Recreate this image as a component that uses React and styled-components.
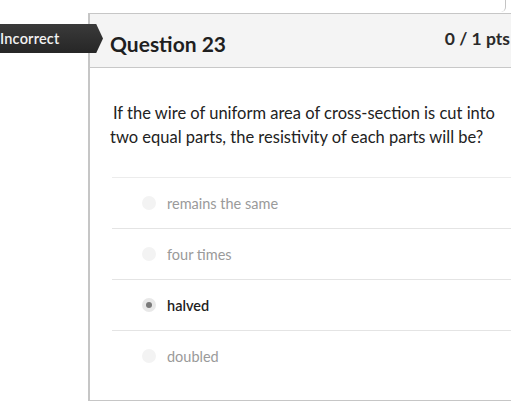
import React from "react";
import styled, { createGlobalStyle } from "styled-components";

const Global = createGlobalStyle`
  html, body { margin: 0; padding: 0; background: #fff; overflow: hidden; }
  body { font-family: Lato, "Open Sans", "Liberation Sans", sans-serif; color: #2d3b45; }
`;

const Page = styled.div`
  position: relative;
  width: 511px;
  height: 408px;
  overflow: hidden;
`;

const TopStrip = styled.div`
  height: 13px;
  display: flex;
  justify-content: flex-end;
`;

const PrevEdge = styled.div`
  width: 24px;
  height: 12px;
  margin-right: 5px;
  border-right: 1px solid #c4c4c4;
  border-bottom-right-radius: 5px;
`;

const Card = styled.div`
  margin-left: 88px;
  width: 432px;
  height: 388px;
  box-sizing: border-box;
  border: 1px solid #c6c6c6;
  border-left: 2px solid #c6c6c6;
  display: flex;
  flex-direction: column;
`;

const Header = styled.div`
  height: 54px;
  box-sizing: border-box;
  background: #f4f4f4;
  border-bottom: 1px solid #c8c8c8;
  display: flex;
  justify-content: space-between;
  padding: 0 9px 0 20px;
`;

const Title = styled.div`
  font-size: 21px;
  font-weight: 700;
  color: #1f1f1f;
  margin-top: 17px;
  line-height: 26px;
`;

const Points = styled.div`
  font-size: 17.5px;
  font-weight: 700;
  color: #2a2a2a;
  margin-top: 14px;
  line-height: 22px;
`;

const Body = styled.div`
  padding: 33px 0 0 20px;
`;

const QuestionText = styled.p`
  margin: 0 14px 0 0;
  font-size: 16.5px;
  line-height: 24px;
  color: #222;
  text-indent: 3px;
  height: 76px;
`;

const Answers = styled.div`
  margin-left: 2px;
`;

const Row = styled.div`
  height: 51px;
  box-sizing: border-box;
  border-top: ${(p) => (p.$first ? "1px solid #ececec" : "1px solid #e4e4e4")};
  display: flex;
  align-items: center;
  padding-left: 30px;
  gap: 11px;
`;

const Radio = styled.span`
  width: 14px;
  height: 14px;
  border-radius: 50%;
  background: ${(p) => (p.$checked ? "#e8e8e8" : "#f3f3f3")};
  display: flex;
  align-items: center;
  justify-content: center;
  flex: none;
  &::after {
    content: "";
    width: 6px;
    height: 6px;
    border-radius: 50%;
    background: #7a7a7a;
    display: ${(p) => (p.$checked ? "block" : "none")};
  }
`;

const AnswerText = styled.span`
  font-size: 14.5px;
  color: ${(p) => (p.$checked ? "#1e1e1e" : "#9a9a9a")};
  font-weight: ${(p) => (p.$checked ? 600 : 400)};
`;

const Badge = styled.div`
  position: absolute;
  left: -10px;
  top: 24px;
  width: 113px;
  height: 29px;
  background: linear-gradient(#3a3a3a, #262626);
  clip-path: polygon(0 0, 94% 0, 100% 50%, 94% 100%, 0 100%);
  color: #f2f2f2;
  font-size: 14.5px;
  font-weight: 600;
  letter-spacing: 0.2px;
  display: flex;
  align-items: center;
  padding-left: 10px;
  box-sizing: border-box;
`;

const answers = [
  { text: "remains the same" },
  { text: "four times" },
  { text: "halved", checked: true },
  { text: "doubled" },
];

export default function App() {
  return (
    <Page>
      <Global />
      <TopStrip>
        <PrevEdge />
      </TopStrip>
      <Card>
        <Header>
          <Title>Question 23</Title>
          <Points>0 / 1 pts</Points>
        </Header>
        <Body>
          <QuestionText>
            If the wire of uniform area of cross-section is cut into two equal parts, the resistivity of each parts will be?
          </QuestionText>
          <Answers>
            {answers.map((a, i) => (
              <Row key={a.text} $first={i === 0}>
                <Radio $checked={a.checked} />
                <AnswerText $checked={a.checked}>{a.text}</AnswerText>
              </Row>
            ))}
          </Answers>
        </Body>
      </Card>
      <Badge>Incorrect</Badge>
    </Page>
  );
}
